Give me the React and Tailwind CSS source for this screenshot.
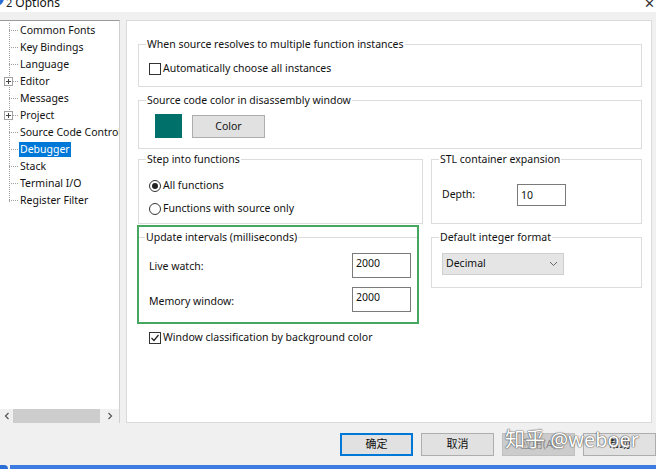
import React from "react";

const FONT = { fontFamily: '"Noto Sans", "Noto Sans CJK SC", sans-serif' };

function Group({ title, className = "", children }) {
  return (
    <div className={"relative border border-[#dcdcdc] " + className}>
      <span className="absolute left-[7px] top-[-9px] bg-white px-[1px] leading-[16px] whitespace-nowrap">
        {title}
      </span>
      {children}
    </div>
  );
}

function CheckBox({ checked }) {
  return (
    <span className="w-[12px] h-[12px] border border-[#333] bg-white flex items-center justify-center shrink-0">
      {checked && (
        <svg width="10" height="10" viewBox="0 0 10 10">
          <path d="M1.5 5 L4 7.5 L8.5 2" fill="none" stroke="#222" strokeWidth="1.2" />
        </svg>
      )}
    </span>
  );
}

function Radio({ checked }) {
  return (
    <span className="w-[12px] h-[12px] rounded-full border border-[#333] bg-white flex items-center justify-center shrink-0">
      {checked && <span className="w-[6px] h-[6px] rounded-full bg-[#222]" />}
    </span>
  );
}

function TreeItem({ label, expand, selected }) {
  return (
    <div className="h-[17px] flex items-center relative">
      <span className="w-[9px] shrink-0" />
      <span className="w-[9px] border-t border-dotted border-[#a0a0a0] shrink-0" />
      {expand && (
        <span className="absolute left-[4px] top-[4px] w-[9px] h-[9px] border border-[#a0a0a0] bg-white flex items-center justify-center">
          <svg width="7" height="7" viewBox="0 0 7 7">
            <path d="M1 3.5 H6 M3.5 1 V6" stroke="#444" strokeWidth="1" />
          </svg>
        </span>
      )}
      <span
        className={
          "ml-[1px] px-[1px] h-[15px] flex items-center whitespace-nowrap " +
          (selected ? "bg-[#0078d7] text-white" : "")
        }
      >
        {label}
      </span>
    </div>
  );
}

function Btn({ children, primary, disabled }) {
  return (
    <div
      className={
        "w-[73px] h-[23px] flex items-center justify-center text-[11px] border " +
        (primary
          ? "border-[#0078d7] bg-[#e1e1e1] border-[2px]"
          : disabled
          ? "border-[#bfbfbf] bg-[#cccccc] text-[#8a8a8a]"
          : "border-[#adadad] bg-[#e1e1e1]")
      }
    >
      {children}
    </div>
  );
}

export default function App() {
  const items = [
    ["Common Fonts"],
    ["Key Bindings"],
    ["Language"],
    ["Editor", true],
    ["Messages"],
    ["Project", true],
    ["Source Code Control"],
    ["Debugger", false, true],
    ["Stack"],
    ["Terminal I/O"],
    ["Register Filter"],
  ];
  return (
    <div
      className="w-[656px] h-[469px] relative overflow-hidden bg-[#f0f0f0] text-[10.5px] text-[#111] flex flex-col"
      style={FONT}
    >
      {/* title bar */}
      <div className="h-[12px] bg-white flex items-end overflow-hidden shrink-0 relative">
        <span className="w-[8px] h-[12px] rounded-br-full bg-[#2b6fd6] ml-[-4px] mb-[6px] shrink-0" />
        <span className="ml-[2px] text-[11px] leading-[18px] mb-[0px] text-[#222]">2</span>
        <span className="ml-[3px] text-[12px] leading-[18px] mb-[0px]">Options</span>
        <span className="ml-auto mr-[1px] text-[13px] leading-[18px] mb-[0px] text-[#333]">✕</span>
      </div>

      {/* body */}
      <div className="flex pt-[8px] shrink-0">
        {/* tree */}
        <div className="w-[120px] h-[403px] bg-white border-t border-t-[#9a9a9a] border-r border-r-[#d0d0d0] flex flex-col overflow-hidden">
          <div className="flex-1 pt-[1px] relative overflow-hidden">
            <div className="absolute left-[9px] top-[2px] h-[179px] border-l border-dotted border-[#a0a0a0]" />
            {items.map(([l, e, s]) => (
              <TreeItem key={l} label={l} expand={e} selected={s} />
            ))}
          </div>
          <div className="h-[14px] bg-[#f0f0f0] flex items-center shrink-0">
            <span className="w-[13px] flex justify-center">
              <svg width="6" height="8" viewBox="0 0 6 8">
                <path d="M4.5 1 L1.5 4 L4.5 7" fill="none" stroke="#555" strokeWidth="1.2" />
              </svg>
            </span>
            <span className="w-[87px] h-[14px] bg-[#cdcdcd]" />
            <span className="flex-1 flex justify-center">
              <svg width="6" height="8" viewBox="0 0 6 8">
                <path d="M1.5 1 L4.5 4 L1.5 7" fill="none" stroke="#555" strokeWidth="1.2" />
              </svg>
            </span>
          </div>
        </div>

        {/* right panel */}
        <div className="ml-[6px] w-[526px] h-[403px] bg-white border border-[#dadada] pl-[11px] pr-[9px] flex flex-col">
          <Group title="When source resolves to multiple function instances" className="mt-[23px] h-[43px] pl-[10px] pt-[17px]">
            <div className="h-[14px] flex items-center gap-[2px]">
              <CheckBox />
              <span>Automatically choose all instances</span>
            </div>
          </Group>

          <Group title="Source code color in disassembly window" className="mt-[13px] h-[49px] pl-[16px] pt-[13px]">
            <div className="flex items-start gap-[10px]">
              <span className="w-[27px] h-[24px] bg-[#00706b]" />
              <span className="w-[73px] h-[23px] mt-[1px] bg-[#e1e1e1] border border-[#adadad] flex items-center justify-center">
                Color
              </span>
            </div>
          </Group>

          <div className="mt-[10px] flex gap-[8px]">
            {/* left column */}
            <div className="w-[285px] flex flex-col">
              <Group title="Step into functions" className="h-[65px] pl-[10px] pt-[18px] flex flex-col gap-[7px]">
                <div className="h-[16px] flex items-center gap-[2px]">
                  <Radio checked />
                  <span>All functions</span>
                </div>
                <div className="h-[16px] flex items-center gap-[2px]">
                  <Radio />
                  <span>Functions with source only</span>
                </div>
              </Group>

              <div className="mt-[1px] ml-[-1px] w-[282px] h-[99px] border-2 border-[#46a860] pt-[10px]">
                <div className="relative border-t border-[#dcdcdc] h-full pl-[10px] pr-[6px] pt-[15px] flex flex-col gap-[9px]">
                  <span className="absolute left-[6px] top-[-9px] bg-white px-[1px] leading-[16px]">
                    Update intervals (milliseconds)
                  </span>
                  <div className="flex items-center justify-between">
                    <span className="pt-[3px]">Live watch:</span>
                    <span className="w-[59px] h-[25px] border border-[#7a7a7a] pl-[3px] pt-[1px] leading-[16px]">2000</span>
                  </div>
                  <div className="flex items-center justify-between">
                    <span className="pt-[4px]">Memory window:</span>
                    <span className="w-[59px] h-[25px] border border-[#7a7a7a] pl-[3px] pt-[1px] leading-[16px]">2000</span>
                  </div>
                </div>
              </div>

              <div className="mt-[7px] ml-[11px] h-[14px] flex items-center gap-[2px]">
                <CheckBox checked />
                <span>Window classification by background color</span>
              </div>
            </div>

            {/* right column */}
            <div className="w-[211px] flex flex-col">
              <Group title="STL container expansion" className="h-[65px] pl-[10px] pt-[24px]">
                <div className="flex items-center">
                  <span className="w-[75px]">Depth:</span>
                  <span className="w-[49px] h-[22px] border border-[#7a7a7a] pl-[3px] leading-[20px]">10</span>
                </div>
              </Group>
              <Group title="Default integer format" className="mt-[13px] h-[51px] pl-[10px] pt-[15px]">
                <div className="w-[122px] h-[22px] bg-[#e5e5e5] border border-[#cfcfcf] flex items-center pl-[3px] pr-[5px] justify-between">
                  <span>Decimal</span>
                  <svg width="9" height="6" viewBox="0 0 9 6">
                    <path d="M1 1 L4.5 4.5 L8 1" fill="none" stroke="#666" strokeWidth="1" />
                  </svg>
                </div>
              </Group>
            </div>
          </div>
        </div>
      </div>

      {/* buttons */}
      <div className="mt-[10px] flex justify-end gap-[8px] shrink-0">
        <Btn primary>确定</Btn>
        <Btn>取消</Btn>
        <Btn disabled>应用(A)</Btn>
        <Btn>帮助</Btn>
      </div>

      {/* bottom edge */}
      <div className="mt-[9px] flex items-end shrink-0 h-[4px]">
        <span className="w-[8px] h-[4px] bg-[#2b6fd6] rounded-tr-full" />
        <span className="flex-1 h-[4px] bg-[#3c7be0] ml-[2px]" />
      </div>

      {/* watermark */}
      <div
        className="absolute left-[505px] top-[426px] text-[20px] leading-[28px] text-white whitespace-nowrap"
        style={{ textShadow: "0 0 1px #555, 0 0 1px #555, 0 0 2px #888" }}
      >
        知乎 @weboer
      </div>
    </div>
  );
}
